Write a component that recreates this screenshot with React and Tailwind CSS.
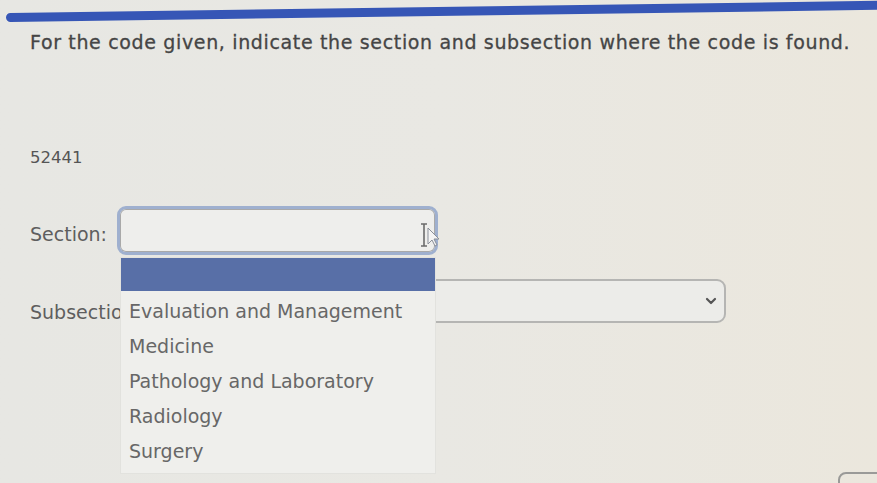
import React from "react";

const options = [
  "Evaluation and Management",
  "Medicine",
  "Pathology and Laboratory",
  "Radiology",
  "Surgery",
];

function Chevron() {
  return (
    <svg width="12" height="8" viewBox="0 0 12 8" fill="none">
      <path d="M2 2l4 4 4-4" stroke="#555" strokeWidth="2.2" strokeLinecap="round" strokeLinejoin="round" />
    </svg>
  );
}

function IBeam() {
  return (
    <svg width="22" height="30" viewBox="0 0 22 30" fill="none">
      <path d="M2 2h3M8 2H5M5 2v22M2 24h6" stroke="#6b6b6b" strokeWidth="1.6" />
      <path d="M9 6v16l4-4 3 6 2-1-3-6h5z" fill="#f4f4f4" stroke="#8a8f99" strokeWidth="1" strokeLinejoin="round" />
    </svg>
  );
}

export default function App() {
  return (
    <div
      className="relative w-[877px] h-[483px] overflow-hidden bg-gradient-to-r from-[#e7e7e3] via-[#e9e8e3] to-[#ebe7dd]"
      style={{ fontFamily: '"DejaVu Sans", "Noto Sans", sans-serif' }}
    >
      <div className="pt-[10px] pl-[6px]">
        <div className="h-[9px] w-[880px] rounded-full bg-[#3656b6] -rotate-[0.8deg] origin-left translate-y-[3px]" />
      </div>

      <div className="pl-[30px]">
        <h1 className="mt-[10px] whitespace-nowrap text-[19px] leading-[26px] text-[#454545] tracking-[0.65px] [-webkit-text-stroke:0.3px_#454545]">
          For the code given, indicate the section and subsection where the code is found.
        </h1>

        <p className="mt-[92px] text-[16.5px] leading-[22px] text-[#555]">52441</p>

        <div className="mt-[37px] flex items-center">
          <span className="w-[87px] pt-[8px] text-[19px] text-[#5e5e5e]">Section:</span>
          <div className="relative h-[49px] w-[321px] rounded-[9px] border-[3px] border-[#9fb0cf] bg-[#eeeeec] shadow-[inset_0_0_0_1px_#a9a9a9]">
            <div className="absolute right-[-6px] top-[13px]">
              <IBeam />
            </div>
          </div>
        </div>

        <div className="mt-[24px] flex items-start">
          <span className="w-[110px] shrink-0 whitespace-nowrap pt-[19px] text-[19px] text-[#5e5e5e]">Subsection:</span>
          <div className="flex h-[44px] w-[586px] items-center justify-end rounded-[9px] border-2 border-[#b5b5b3] bg-[#ecece9] pr-[7px]">
            <Chevron />
          </div>
        </div>
      </div>

      {/* open listbox of the Section select, drawn over the Subsection row */}
      <div className="absolute left-[120px] top-[257px] w-[316px] border border-[#e2e2de] bg-[#efefec] pb-[4px]">
        <div className="h-[33px] bg-[#586fa7]" />
        <ul className="pt-[3px]">
          {options.map((o) => (
            <li key={o} className="h-[35px] pl-[8px] text-[19px] leading-[35px] text-[#676767]">
              {o}
            </li>
          ))}
        </ul>
      </div>

      <div className="absolute left-[838px] top-[472px] h-[30px] w-[80px] rounded-[8px] border-2 border-[#9a9a98]" />
    </div>
  );
}
